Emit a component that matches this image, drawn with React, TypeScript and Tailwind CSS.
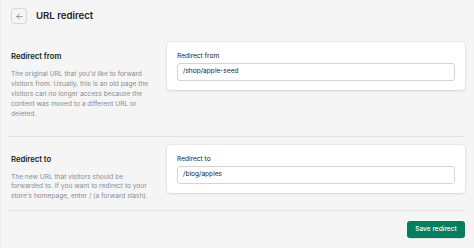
import { ArrowLeft } from 'lucide-react'

function Section({
  title,
  description,
  label,
  value,
  className,
}: {
  title: string
  description: string
  label: string
  value: string
  className: string
}) {
  return (
    <div className={`flex items-start gap-[17px] border-b border-[#e3e3e3] ${className}`}>
      <div className="w-[142px] shrink-0 pl-[3px] pt-[10px]">
        <h2 className="text-[7.7px] font-semibold leading-[10px] text-[#202223]">{title}</h2>
        <p className="mt-[8px] text-[6.6px] leading-[9.9px] text-[#8a8d91]">{description}</p>
      </div>
      <div className="h-[48px] flex-1 rounded-[4px] bg-white px-[10px] pt-[10px] shadow-[0_0_0_1px_rgba(63,63,68,0.05),0_1px_3px_rgba(63,63,68,0.12)]">
        <label className="block text-[6.6px] leading-[9px] text-[#202223]">{label}</label>
        <div className="mt-[2px] flex h-[18px] items-center rounded-[3px] border border-[#d2d5d8] px-[5px] text-[6.6px] text-[#202223]">
          {value}
        </div>
      </div>
    </div>
  )
}

export default function App() {
  return (
    <div
      className="h-[248px] w-[474px] overflow-hidden border-l border-[#ebebeb] bg-[#f5f5f5] pl-[7px] pr-[9px]"
      style={{ fontFamily: 'Inter, "Noto Sans", sans-serif' }}
    >
      <div className="flex h-[33px] items-center gap-[9px] pl-[3px] pb-[1px]">
        <button className="flex h-[16px] w-[16px] items-center justify-center rounded-[3px] border border-[#d9d9d9] bg-[#f5f5f5] text-[#5c5f62]">
          <ArrowLeft className="h-[9px] w-[9px]" strokeWidth={1.6} />
        </button>
        <h1 className="text-[9.6px] font-semibold text-[#202223]">URL redirect</h1>
      </div>

      <Section
        className="pt-[9px] pb-[16px]"
        title="Redirect from"
        description="The original URL that you'd like to forward visitors from. Usually, this is an old page the visitors can no longer access because the content was moved to a different URL or deleted."
        label="Redirect from"
        value="/shop/apple-seed"
      />
      <Section
        className="pt-[8px] pb-[8px]"
        title="Redirect to"
        description="The new URL that visitors should be forwarded to. If you want to redirect to your store's homepage, enter / (a forward slash)."
        label="Redirect to"
        value="/blog/apples"
      />

      <div className="flex justify-end pt-[10px]">
        <button className="h-[17px] w-[58px] rounded-[3px] bg-[#008060] text-[6.6px] font-medium text-white shadow-[0_1px_0_rgba(0,0,0,0.08)]">
          Save redirect
        </button>
      </div>
    </div>
  )
}
